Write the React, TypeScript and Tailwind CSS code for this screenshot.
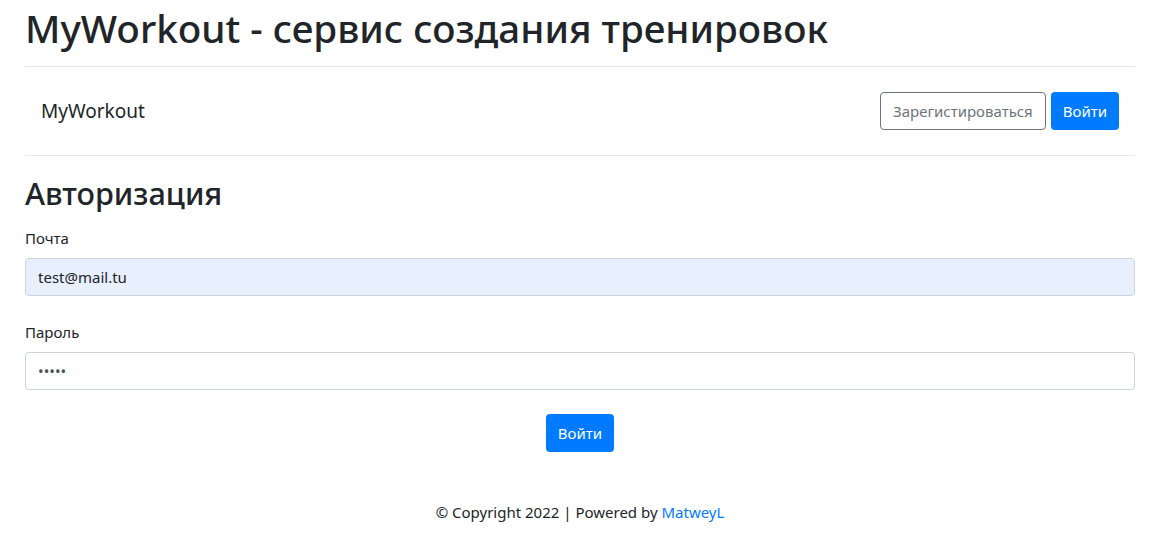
export default function App() {
  return (
    <div
      className="min-h-[533px] bg-white text-[#212529] pl-[25px] pr-[29px]"
      style={{ fontFamily: '"Noto Sans", "Open Sans", sans-serif' }}
    >
      <h1 className="text-[38.6px] leading-[48px] font-medium pt-[4px] pb-[14px]">
        MyWorkout - сервис создания тренировок
      </h1>

      {/* Navbar */}
      <nav className="border-t border-b border-[#e6e6e6] py-[25px] px-4 flex items-center justify-between">
        <span className="text-[19px] leading-[38px]">MyWorkout</span>
        <div className="flex items-center gap-[5px]">
          <button className="h-[38px] px-3 rounded border border-[#6c757d] text-[#6c757d] text-[15px]">
            Зарегистироваться
          </button>
          <button className="h-[38px] px-3 rounded bg-[#007bff] text-white text-[15px]">
            Войти
          </button>
        </div>
      </nav>

      {/* Form */}
      <h2 className="text-[30.6px] leading-[38px] font-medium mt-[18px] mb-[14px]">
        Авторизация
      </h2>
      <form className="flex flex-col" onSubmit={(e) => e.preventDefault()}>
        <label className="text-[15px] leading-[24px] mb-2">Почта</label>
        <input
          type="email"
          defaultValue="test@mail.tu"
          className="h-[38px] px-3 rounded border border-[#ced4da] bg-[#e8f0fe] text-[15px] text-[#212529] outline-none"
        />
        <label className="text-[15px] leading-[24px] mb-2 mt-6">Пароль</label>
        <input
          type="password"
          defaultValue="12345"
          className="h-[38px] px-3 rounded border border-[#ced4da] bg-white text-[15px] text-[#495057] outline-none"
        />
        <div className="flex justify-center mt-6">
          <button className="h-[38px] px-3 rounded bg-[#007bff] text-white text-[15px]">
            Войти
          </button>
        </div>
      </form>

      <footer className="text-center text-[15px] leading-[24px] mt-12">
        © Copyright 2022 | Powered by <a className="text-[#007bff]" href="#">MatweyL</a>
      </footer>
    </div>
  );
}
